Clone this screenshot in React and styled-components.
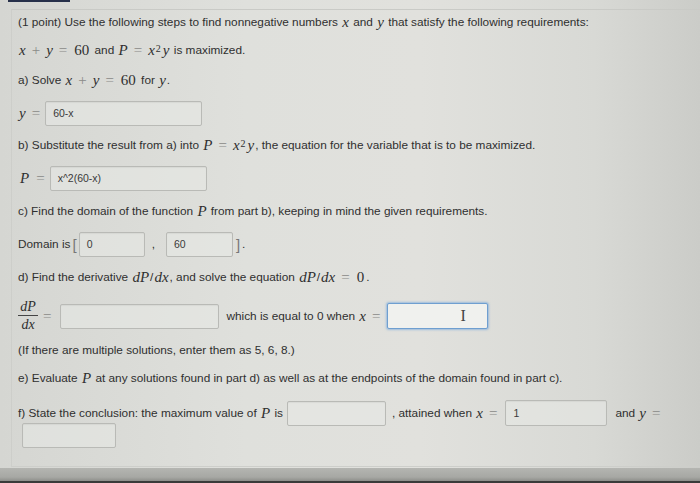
import React from 'react';
import styled, { createGlobalStyle } from 'styled-components';

const GlobalStyle = createGlobalStyle`
  html, body {
    margin: 0;
    padding: 0;
  }
  body {
    width: 700px;
    height: 483px;
    overflow: hidden;
    background: linear-gradient(to right, #d5d6d2 0%, #dfe0dc 35%, #e1e1dd 60%, #d8d9d5 85%, #cbccc8 100%);
    font-family: "Liberation Sans", Arial, sans-serif;
    color: #2f2f2f;
  }
`;

const Screen = styled.div`
  width: 700px;
  height: 483px;
  display: flex;
  flex-direction: column;
`;

const TopStrip = styled.div`
  height: 9px;
  display: flex;
`;

const TabMark = styled.div`
  width: 62px;
  height: 2px;
  margin-left: 8px;
  background: #27304a;
`;

const Panel = styled.div`
  margin-left: 11px;
  height: 458px;
  border-top: 1px solid #c9cac6;
  border-left: 1px solid #cdceca;
  border-bottom: 1px solid #cdceca;
  padding: 3px 0 0 6px;
  box-sizing: border-box;
  font-size: 11.8px;
`;

const BottomBand = styled.div`
  height: 13px;
  margin-top: 1px;
  background: linear-gradient(to bottom, #b4b5b1, #a7a8a4 70%, #8d8e8a);
  border-bottom: 2px solid #3a3b3a;
`;

const Line = styled.div`
  display: flex;
  align-items: center;
  white-space: nowrap;
  height: ${p => p.$h || 18}px;
  margin-top: ${p => p.$mt || 0}px;
  padding-left: ${p => p.$indent || 0}px;
`;

const M = styled.span`
  font-family: "Liberation Serif", "Times New Roman", serif;
  font-style: italic;
  font-synthesis: style;
  font-size: 15px;
  margin: 0 ${p => p.$gap || 1}px;
`;

const Sup = styled.sup`
  font-family: "Liberation Serif", "Times New Roman", serif;
  font-size: 10px;
  position: relative;
  top: -2px;
  margin-right: 1px;
`;

const Num = styled.span`
  font-family: "Liberation Serif", "Times New Roman", serif;
  font-size: 15px;
  margin: 0 2px;
`;

const Op = styled.span`
  font-family: "Liberation Serif", "Times New Roman", serif;
  font-size: 15px;
  color: #8a8a88;
  margin: 0 5px;
`;

const Box = styled.span`
  display: inline-flex;
  align-items: center;
  box-sizing: border-box;
  width: ${p => p.$w}px;
  height: ${p => p.$hh || 25}px;
  margin-left: ${p => p.$ml ?? 4}px;
  margin-right: ${p => p.$mr ?? 4}px;
  padding-left: 7px;
  border: 1px solid ${p => (p.$focus ? '#6f9fd0' : '#b9bab6')};
  box-shadow: ${p => (p.$focus ? '0 0 2px 1px rgba(102,160,220,0.55)' : 'inset 0 1px 1px rgba(0,0,0,0.05)')};
  border-radius: 2px;
  background: ${p => (p.$focus ? '#f0f1ee' : 'rgba(232,233,229,0.55)')};
  font-size: 10.5px;
  color: #3a3a3a;
  position: relative;
`;

const Cursor = styled.span`
  position: absolute;
  left: 72px;
  top: 5px;
  font-family: "Liberation Serif", serif;
  font-size: 16px;
  line-height: 14px;
  color: #444;
`;

const Frac = styled.span`
  display: inline-flex;
  flex-direction: column;
  align-items: center;
  width: 20px;
  font-family: "Liberation Serif", "Times New Roman", serif;
  font-style: italic;
  font-size: 14px;
  line-height: 14px;
`;

const FracBar = styled.span`
  align-self: stretch;
  height: 1px;
  background: #444;
  margin: 1px 0 2px;
`;

const Bracket = styled.span`
  font-size: 15px;
  color: #777;
  margin: 0 2px;
`;

export default function App() {
  return (
    <Screen>
      <GlobalStyle />
      <TopStrip>
        <TabMark />
      </TopStrip>
      <Panel>
        <Line>
          (1 point) Use the following steps to find nonnegative numbers&nbsp;<M>x</M>&nbsp;and&nbsp;<M>y</M>&nbsp;that satisfy the following requirements:
        </Line>
        <Line $mt={10}>
          <M>x</M><Op>+</Op><M>y</M><Op>=</Op><Num>60</Num>&nbsp;and&nbsp;<M>P</M><Op>=</Op><M>x</M><Sup>2</Sup><M>y</M>&nbsp;is maximized.
        </Line>
        <Line $mt={12}>
          a) Solve&nbsp;<M>x</M><Op>+</Op><M>y</M><Op>=</Op><Num>60</Num>&nbsp;for&nbsp;<M>y</M>.
        </Line>
        <Line $h={26} $mt={11}>
          <M>y</M><Op>=</Op>
          <Box $w={157} $ml={0}>60-x</Box>
        </Line>
        <Line $mt={10}>
          b) Substitute the result from a) into&nbsp;<M>P</M><Op>=</Op><M>x</M><Sup>2</Sup><M>y</M>, the equation for the variable that is to be maximized.
        </Line>
        <Line $h={26} $mt={11}>
          <M $gap={2}>P</M><Op>=</Op>
          <Box $w={157} $ml={0}>x^2(60-x)</Box>
        </Line>
        <Line $mt={11}>
          c) Find the domain of the function&nbsp;<M>P</M>&nbsp;from part b), keeping in mind the given requirements.
        </Line>
        <Line $h={26} $mt={11}>
          Domain is<Bracket>[</Bracket>
          <Box $w={66} $ml={0} $mr={7}>0</Box>,
          <Box $w={67} $ml={11} $mr={1}>60</Box>
          <Bracket>]</Bracket>.
        </Line>
        <Line $mt={11}>
          d) Find the derivative&nbsp;<M>dP</M>/<M>dx</M>, and solve the equation&nbsp;<M>dP</M>/<M>dx</M><Op>=</Op><Num>0</Num>.
        </Line>
        <Line $h={34} $mt={13}>
          <Frac>
            <span>dP</span>
            <FracBar />
            <span>dx</span>
          </Frac>
          <Op>=</Op>
          <Box $w={159} $ml={4} $mr={7}></Box>
          which is equal to 0 when&nbsp;<M>x</M><Op>=</Op>
          <Box $w={101} $hh={26} $ml={2} $focus>
            <Cursor>I</Cursor>
          </Box>
        </Line>
        <Line $mt={8}>
          (If there are multiple solutions, enter them as 5, 6, 8.)
        </Line>
        <Line $mt={10}>
          e) Evaluate&nbsp;<M>P</M>&nbsp;at any solutions found in part d) as well as at the endpoints of the domain found in part c).
        </Line>
        <Line $h={26} $mt={13}>
          f) State the conclusion: the maximum value of&nbsp;<M>P</M>&nbsp;is
          <Box $w={99} $ml={4} $mr={6}></Box>
          , attained when&nbsp;<M>x</M><Op>=</Op>
          <Box $w={102} $hh={26} $ml={3} $mr={8}>1</Box>
          and&nbsp;<M>y</M><Op>=</Op>
        </Line>
        <Line $h={26} $mt={-4} $indent={4}>
          <Box $w={94} $ml={0}></Box>
        </Line>
      </Panel>
      <BottomBand />
    </Screen>
  );
}
